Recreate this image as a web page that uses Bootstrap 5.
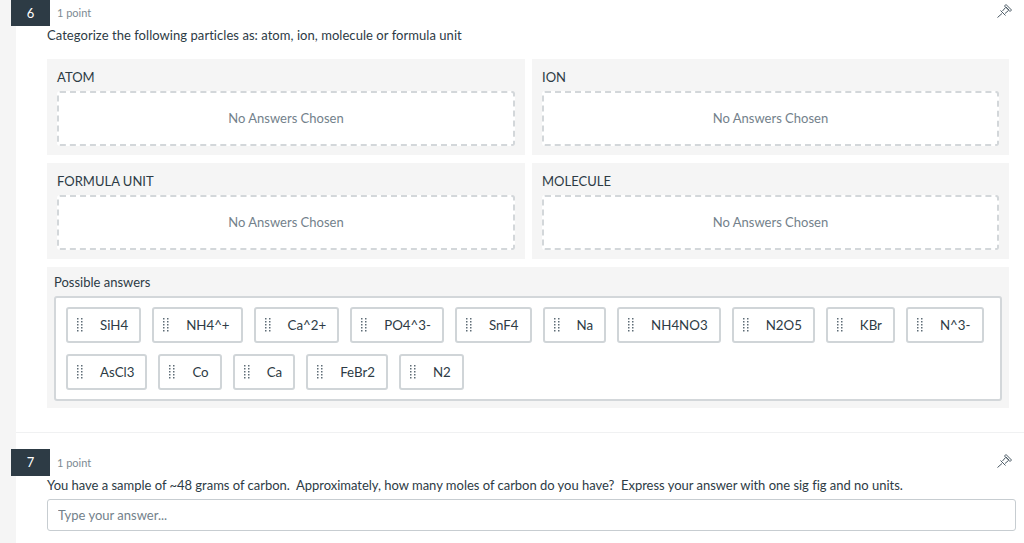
<!DOCTYPE html>
<html lang="en">
<head>
  <meta charset="UTF-8">
  <meta name="viewport" content="width=device-width, initial-scale=1.0">
  <title>Quiz</title>
  <link href="https://cdn.jsdelivr.net/npm/bootstrap@5.3.0/dist/css/bootstrap.min.css" rel="stylesheet">
  <style>
    body {
      font-family: Lato, "Liberation Sans", sans-serif;
      font-size: 13px;
      color: #2d3b45;
      background: #fff;
      overflow: hidden;
    }
    .quiz-wrap { height: 543px; border-left: 16px solid #f5f5f5; }
    .q-head { height: 27px; margin-left: -5px; padding-right: 12px; }
    .q-num {
      width: 39px; height: 27px; background: #2d3b45; color: #fff;
      font-size: 13px; line-height: 27px; text-align: center;
    }
    .q-pts { font-size: 11px; color: #7d8a93; margin-left: 7px; padding-top: 6px; }
    .q-pin { margin-top: 5px; }
    .q-text { margin-left: 31px; line-height: 18px; letter-spacing: -.02px; }
    .q-first { height: 26px; }
    .q-first .q-num { height: 26px; line-height: 26px; }
    .q-first .q-pts { padding-top: 5px; }
    .q-first .q-pin { margin-top: 4px; }
    .q-first + .q-text { letter-spacing: .05px; }
    .q-body { margin: 15px 15px 0 31px; }
    .cat-grid { display: grid; grid-template-columns: 478px 477px; gap: 8px 7px; }
    .cat-cell { background: #f5f5f5; height: 96px; padding: 9px 10px; }
    .cat-title { line-height: 18px; margin-bottom: 5px; }
    .cat-drop {
      height: 55px; background: #fff; border: 2px dashed #d3d7da; border-radius: 3px;
      color: #73818b; display: flex; align-items: center; justify-content: center;
    }
    .ans-panel { background: #f5f5f5; margin-top: 8px; padding: 6px 7px 7px; height: 141px; }
    .ans-title { line-height: 18px; margin-bottom: 5px; }
    .ans-box {
      background: #fff; border: 2px solid #d3d7da; border-radius: 3px; height: 105px;
      padding: 9px 10px; display: flex; flex-wrap: wrap; gap: 11px; align-content: flex-start;
    }
    .ans-chip {
      height: 36px; border: 2px solid #d0d5d8; border-radius: 3px; background: #fff;
      display: flex; align-items: center; padding: 0 11px 0 9px; font-size: 13.3px;
    }
    .ans-chip svg { margin-right: 17px; }
    .ans-chip span { padding-top: 1px; }
    .q-divider { border-top: 1px solid #f0f1f2; margin: 24px 0 16px; }
    .q-input {
      display: block; width: 969px; height: 32px; margin: 5px 0 0 31px; padding: 0 10px;
      border: 1px solid #c7cdd1; border-radius: 3px; font-size: 13px; color: #2d3b45;
    }
    .q-input::placeholder { color: #73818b; opacity: 1; }
  </style>
</head>
<body>
  <div class="quiz-wrap">
    <!-- Question 6 -->
    <div class="d-flex q-head q-first">
      <div class="q-num">6</div>
      <div class="q-pts flex-grow-1">1 point</div>
      <svg class="q-pin" width="15" height="15" viewBox="0 0 15 15" fill="none" stroke="#4b5a65" stroke-width="1">
        <path d="M.5 13.500 5 9.500M3.500 6.500 8.500 11.500M5.500 7 8.500 3.500M8 9.500 11.500 6.500M7.500 2 13 7.500M9 .5 14.500 6M7.500 2 9 .5M13 7.500 14.500 6M9 3 12 6"/>
      </svg>
    </div>
    <div class="q-text">Categorize the following particles as: atom, ion, molecule or formula unit</div>
    <div class="q-body">
      <div class="cat-grid">
        <div class="cat-cell"><div class="cat-title">ATOM</div><div class="cat-drop">No Answers Chosen</div></div>
        <div class="cat-cell"><div class="cat-title">ION</div><div class="cat-drop">No Answers Chosen</div></div>
        <div class="cat-cell"><div class="cat-title">FORMULA UNIT</div><div class="cat-drop">No Answers Chosen</div></div>
        <div class="cat-cell"><div class="cat-title">MOLECULE</div><div class="cat-drop">No Answers Chosen</div></div>
      </div>
      <div class="ans-panel">
        <div class="ans-title">Possible answers</div>
        <div class="ans-box" id="answers"></div>
      </div>
    </div>
    <div class="q-divider"></div>
    <!-- Question 7 -->
    <div class="d-flex q-head">
      <div class="q-num">7</div>
      <div class="q-pts flex-grow-1">1 point</div>
      <svg class="q-pin" width="15" height="15" viewBox="0 0 15 15" fill="none" stroke="#4b5a65" stroke-width="1">
        <path d="M.5 13.500 5 9.500M3.500 6.500 8.500 11.500M5.500 7 8.500 3.500M8 9.500 11.500 6.500M7.500 2 13 7.500M9 .5 14.500 6M7.500 2 9 .5M13 7.500 14.500 6M9 3 12 6"/>
      </svg>
    </div>
    <div class="q-text">You have a sample of ~48 grams of carbon.&nbsp; Approximately, how many moles of carbon do you have?&nbsp; Express your answer with one sig fig and no units.</div>
    <input class="q-input" type="text" placeholder="Type your answer...">
  </div>

  <script>
    const answers = ['SiH4', 'NH4^+', 'Ca^2+', 'PO4^3-', 'SnF4', 'Na', 'NH4NO3', 'N2O5', 'KBr', 'N^3-', 'AsCl3', 'Co', 'Ca', 'FeBr2', 'N2'];
    // grip: two columns of dots, five rows
    let dots = '';
    for (let y = 0; y < 5; y++) {
      dots += `<rect x="0" y="${y * 3}" width="1.5" height="1.5"/><rect x="4" y="${y * 3}" width="1.5" height="1.5"/>`;
    }
    document.getElementById('answers').innerHTML = answers.map(a =>
      `<div class="ans-chip"><svg width="6" height="14" viewBox="0 0 6 14" fill="#5f6d77">${dots}</svg><span>${a}</span></div>`
    ).join('');
  </script>
  <script src="https://cdn.jsdelivr.net/npm/bootstrap@5.3.0/dist/js/bootstrap.bundle.min.js"></script>
</body>
</html>
